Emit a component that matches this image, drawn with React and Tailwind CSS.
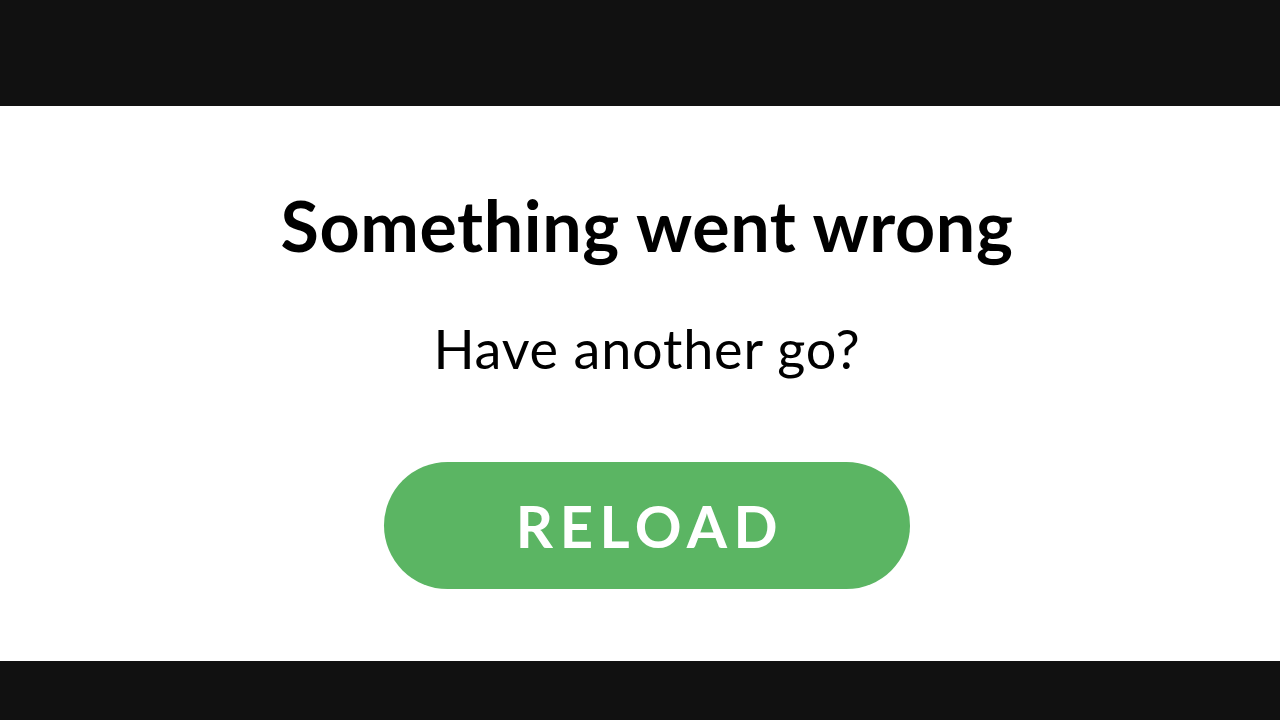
export default function App() {
  return (
    <div className="flex h-[720px] w-[1280px] flex-col bg-[#111111]" style={{ fontFamily: 'Lato, "Noto Sans", sans-serif' }}>
      <div className="h-[106px] shrink-0" />
      <main className="flex h-[555px] shrink-0 flex-col items-center bg-white pl-[14px] pt-[79px]">
        <h1 className="text-[70px] font-bold leading-[80px] tracking-[0.6px] text-black">
          Something went wrong
        </h1>
        <p className="mt-[54px] text-[54px] leading-[60px] tracking-[0.8px] text-black">Have another go?</p>
        <button className="mt-[83px] flex h-[127px] w-[526px] items-center justify-center rounded-full bg-[#5bb563] pl-[6px] text-[58px] font-bold tracking-[6.5px] text-white">
          RELOAD
        </button>
      </main>
      <div className="flex-1" />
    </div>
  )
}
